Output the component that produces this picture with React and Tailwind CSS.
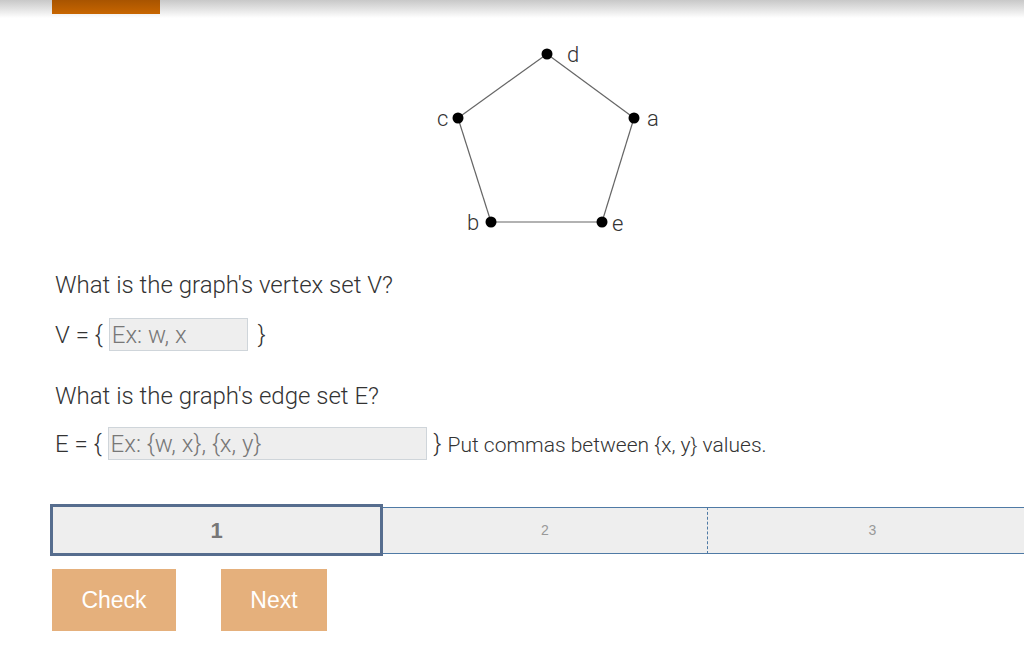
import React from 'react'

const nodes = [
  { id: 'd', x: 547, y: 54, lx: 567, ly: 62 },
  { id: 'a', x: 634, y: 118, lx: 647, ly: 126 },
  { id: 'e', x: 602, y: 222, lx: 612, ly: 231 },
  { id: 'b', x: 491, y: 222, lx: 467, ly: 230 },
  { id: 'c', x: 458, y: 118, lx: 437, ly: 126 },
]

const Graph = () => (
  <svg width="1024" height="232" viewBox="0 18 1024 232" className="block">
    {nodes.map((n, i) => {
      const m = nodes[(i + 1) % nodes.length]
      return <line key={'l' + i} x1={n.x} y1={n.y} x2={m.x} y2={m.y} stroke="#666" strokeWidth="1.2" />
    })}
    {nodes.map(n => (
      <g key={n.id}>
        <circle cx={n.x} cy={n.y} r="5.5" fill="#000" />
        <text x={n.lx} y={n.ly} fill="#333" fontSize="22" fontWeight="300" fontFamily="Roboto, sans-serif">{n.id}</text>
      </g>
    ))}
  </svg>
)

const App = () => {
  return (
    <div className="w-[1024px] h-[669px] overflow-hidden bg-white text-[#333] font-['Roboto',sans-serif] font-light">
      <div className="h-[18px] bg-gradient-to-b from-[#c8c8c8] to-white">
        <div className="ml-[52px] w-[108px] h-[14px] bg-gradient-to-b from-[#a85400] to-[#c86600]"></div>
      </div>

      <Graph />

      <div className="pl-[55px]">
        <p className="mt-[20px] text-[24px] leading-[30px]">What is the graph's vertex set V?</p>
        <div className="mt-[18px] flex items-center h-[33px] text-[24px]">
          <span>V = {'{'}</span>
          <input
            className="ml-[6px] w-[139px] h-[33px] bg-[#eeeeee] border border-[#cfd5da] px-[2px] text-[24px] font-light placeholder:text-[#777] outline-none"
            placeholder="Ex: w, x"
          />
          <span className="ml-[10px]">{'}'}</span>
        </div>

        <p className="mt-[30px] text-[24px] leading-[30px]">What is the graph's edge set E?</p>
        <div className="mt-[16px] flex items-center h-[33px] text-[24px]">
          <span>E = {'{'}</span>
          <input
            className="ml-[6px] w-[319px] h-[33px] bg-[#eeeeee] border border-[#cfd5da] px-[2px] text-[24px] font-light placeholder:text-[#777] outline-none"
            placeholder="Ex: {w, x}, {x, y}"
          />
          <span className="ml-[7px]">{'}'}</span>
          <span className="ml-[6px] pt-[4px] text-[21px]">Put commas between {'{'}x, y{'}'} values.</span>
        </div>
      </div>

      <div className="mt-[44px] ml-[50px] flex items-center h-[52px] font-['Liberation_Sans',Arial,sans-serif] font-normal">
        <div className="w-[333px] h-[52px] shrink-0 border-[3px] border-[#566d8e] bg-[#eeeeee] flex items-center justify-center text-[22px] font-bold text-[#777]">1</div>
        <div className="w-[324px] h-[47px] shrink-0 border-y border-[#4f7aa5] bg-[#eeeeee] flex items-center justify-center text-[14px] text-[#999]">2</div>
        <div className="w-[330px] h-[47px] shrink-0 border-y border-l [border-left-style:dashed] border-[#4f7aa5] bg-[#eeeeee] flex items-center justify-center text-[14px] text-[#999]">3</div>
      </div>

      <div className="mt-[13px] ml-[52px] flex gap-[45px] font-['Liberation_Sans',Arial,sans-serif] font-normal">
        <button className="w-[124px] h-[62px] bg-[#e5b07c] text-white text-[23px]">Check</button>
        <button className="w-[106px] h-[62px] bg-[#e5b07c] text-white text-[23px]">Next</button>
      </div>
    </div>
  )
}

export default App
